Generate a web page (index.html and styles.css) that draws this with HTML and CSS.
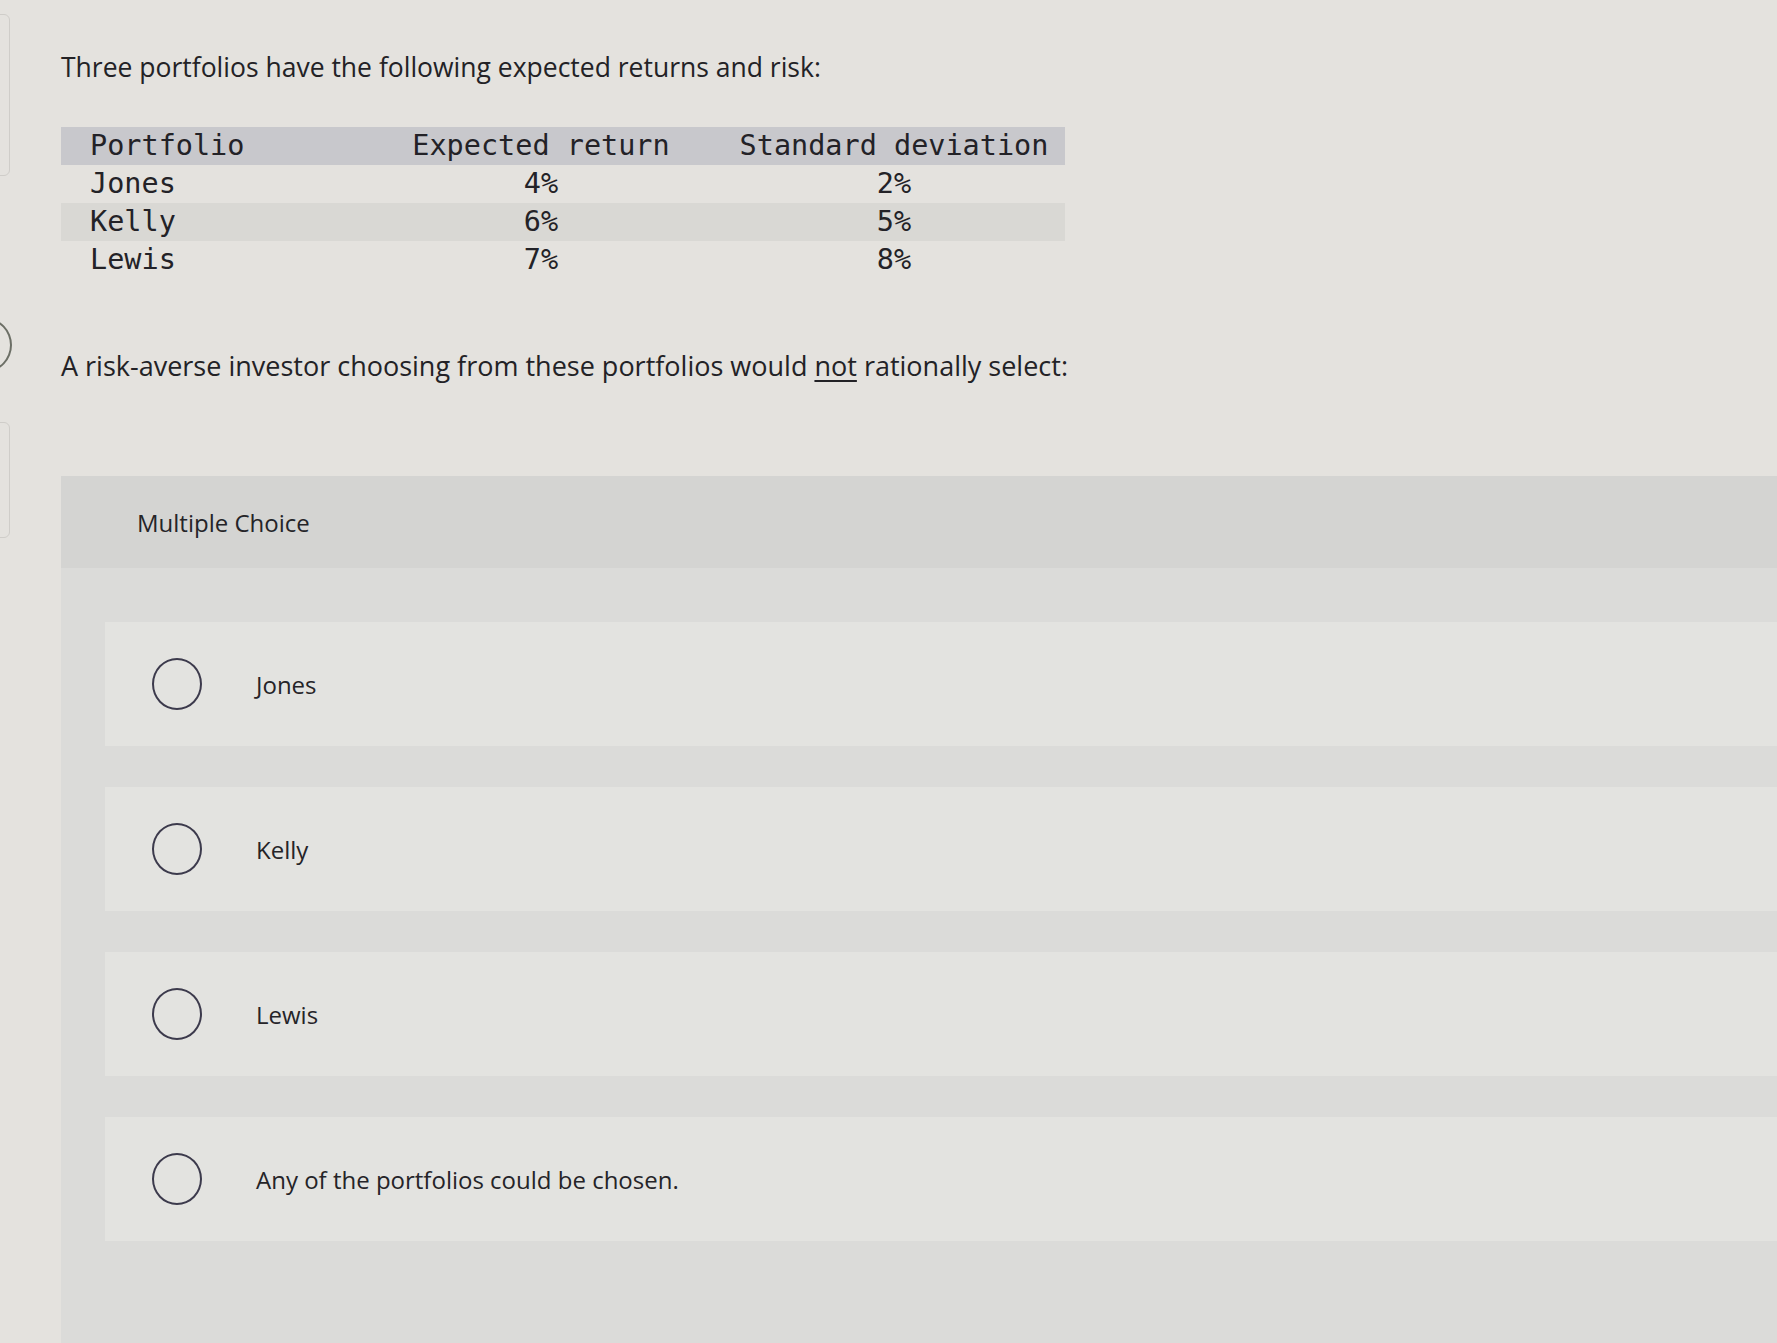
FILE: index.html
```html
<!DOCTYPE html>
<html lang="en">
<head>
<meta charset="utf-8">
<title>Multiple Choice</title>
<link rel="stylesheet" href="styles.css">
</head>
<body>
<div class="page">
  <aside class="rail">
    <div class="rail-box rail-box-top"></div>
    <div class="rail-dot"></div>
    <div class="rail-box rail-box-mid"></div>
  </aside>
  <main class="content">
    <p class="intro">Three portfolios have the following expected returns and risk:</p>
    <table class="data">
      <thead>
        <tr><th class="c1">Portfolio</th><th class="c2">Expected return</th><th class="c3">Standard deviation</th></tr>
      </thead>
      <tbody>
        <tr><td class="c1">Jones</td><td class="c2">4%</td><td class="c3">2%</td></tr>
        <tr class="stripe"><td class="c1">Kelly</td><td class="c2">6%</td><td class="c3">5%</td></tr>
        <tr><td class="c1">Lewis</td><td class="c2">7%</td><td class="c3">8%</td></tr>
      </tbody>
    </table>
    <p class="question">A risk-averse investor choosing from these portfolios would <u class="not">not</u> rationally select:</p>
    <section class="mc">
      <div class="mc-head">Multiple Choice</div>
      <div class="mc-body">
        <label class="opt"><span class="radio"></span><span class="opt-text">Jones</span></label>
        <label class="opt"><span class="radio"></span><span class="opt-text">Kelly</span></label>
        <label class="opt"><span class="radio"></span><span class="opt-text">Lewis</span></label>
        <label class="opt"><span class="radio"></span><span class="opt-text">Any of the portfolios could be chosen.</span></label>
      </div>
    </section>
  </main>
</div>
</body>
</html>
```
FILE: styles.css
```css
html, body {
  margin: 0;
  padding: 0;
  height: 100%;
  overflow: hidden;
}
body {
  background: #e4e2de;
  font-family: "Open Sans", Lato, "Liberation Sans", sans-serif;
  color: #262528;
}
.page {
  display: flex;
  min-height: 1343px;
}
.rail {
  width: 12px;
  flex: none;
  overflow: hidden;
  display: flex;
  flex-direction: column;
}
.rail-box {
  margin-left: -30px;
  width: 38px;
  border: 1.5px solid #cfcdc9;
  border-radius: 6px;
}
.rail-box-top {
  margin-top: 14px;
  height: 160px;
}
.rail-dot {
  margin-top: 142px;
  margin-left: -40px;
  width: 48px;
  height: 50px;
  border: 2px solid #6c6f66;
  border-radius: 50%;
}
.rail-box-mid {
  margin-top: 50px;
  height: 114px;
}
.content {
  flex: 1;
  padding-left: 49px;
  display: flex;
  flex-direction: column;
}
.intro {
  margin: 50px 0 0;
  font-size: 26.5px;
  line-height: 34px;
  color: #232226;
}
.data {
  margin-top: 43px;
  width: 1004px;
  table-layout: fixed;
  border-collapse: collapse;
  font-family: "DejaVu Sans Mono", "Liberation Mono", monospace;
  font-size: 28.5px;
  color: #232227;
}
.data th, .data td {
  box-sizing: border-box;
  height: 38px;
  padding: 0;
  font-weight: normal;
  line-height: 38px;
}
.data thead tr {
  background: #c8c8cc;
}
.data .stripe {
  background: #d9d8d4;
}
.data .c1 {
  width: 298px;
  text-align: left;
  padding-left: 29px;
}
.data .c2 {
  width: 364px;
  text-align: center;
}
.data .c3 {
  width: 342px;
  text-align: center;
}
.question {
  margin: 70px 0 0;
  font-size: 27px;
  line-height: 34px;
  color: #232226;
}
.not {
  text-decoration-thickness: 1.5px;
  text-underline-offset: 4px;
}
.mc {
  margin-top: 93px;
  background: #dbdbd9;
  flex: 1;
}
.mc-head {
  height: 92px;
  background: #d4d4d2;
  display: flex;
  align-items: center;
  padding-left: 76px;
  font-size: 24px;
  color: #252428;
}
.mc-body {
  padding: 54px 0 0 44px;
  display: flex;
  flex-direction: column;
  gap: 41px;
}
.opt {
  height: 124px;
  background: #e3e3e0;
  display: flex;
  align-items: center;
  padding-left: 47px;
}
.radio {
  width: 46px;
  height: 48px;
  border: 2px solid #3c3a4c;
  border-radius: 50%;
  flex: none;
}
.opt-text {
  margin-left: 54px;
  font-size: 24px;
  color: #252428;
}
```
